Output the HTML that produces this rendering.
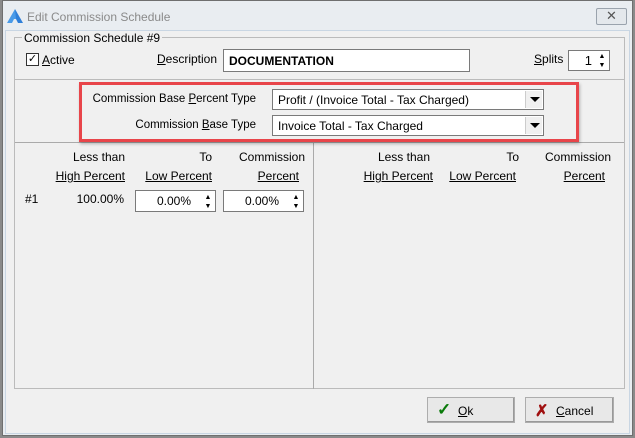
<!DOCTYPE html><html><head><style>
*{margin:0;padding:0;box-sizing:border-box}
body{width:635px;height:438px;overflow:hidden;background:#8a8a8a;font-family:"Liberation Sans",sans-serif;font-size:12px;color:#000;position:relative}
.a{position:absolute}
.win{left:2px;top:0;width:631px;height:436px;background:#e9edf1;border:1px solid #6f6f6f}
.body{left:5px;top:30px;width:625px;height:404px;background:#f0f0f0;border:1px solid #c9d6e3}
.t{position:absolute;white-space:nowrap}
.r{text-align:right}
u{text-decoration:underline}
.inp{position:absolute;background:#fff;border:1px solid #7a7a7a}
.dd{position:absolute;right:1px;top:1px;bottom:1px;width:17px;background:#f0f0f0;border-left:1px solid #ccc}
.dd:after{content:"";position:absolute;left:4px;top:6px;border-left:5px solid transparent;border-right:5px solid transparent;border-top:5px solid #000}
.spin{position:absolute;right:1px;top:1px;bottom:1px;width:12px;font-size:7px;line-height:9px;text-align:center}
.btn{position:absolute;background:#e8e8e8;border:1px solid #adadad;box-shadow:inset -1px -1px #999}
</style></head><body>
<div class="a win"></div>
<svg class="a" style="left:7px;top:9px" width="16" height="14" viewBox="0 0 16 14"><path d="M8 0 L16 14 L11 14 L8 8 Z" fill="#2f7fd8"/><path d="M8 0 L0 14 L5 14 L7 10 L9 10 Z" fill="#4a9be8"/></svg>
<div class="t" style="left:27px;top:10px;font-size:12px;color:#8a8a8a">Edit Commission Schedule</div>
<div class="a" style="left:596px;top:8px;width:31px;height:17px;border:1px solid #9aa3ad;background:#e4e8ec;border-radius:2px;font-size:13px;text-align:center;line-height:14px;color:#555">✕</div>
<div class="a body"></div>
<div class="a" style="left:14px;top:37px;width:611px;height:352px;border:1px solid #bbb"></div>
<div class="t" style="left:22px;top:31px;font-size:12px;background:#f0f0f0;padding:0 2px">Commission Schedule #9</div>
<div class="a" style="left:26px;top:53px;width:13px;height:13px;border:1px solid #333;background:#fff;font-size:11px;line-height:11px;text-align:center">✓</div>
<div class="t" style="left:42px;top:53px;font-size:12px"><u>A</u>ctive</div>
<div class="t" style="left:157px;top:52px;font-size:12px"><u>D</u>escription</div>
<div class="inp" style="left:223px;top:49px;width:247px;height:23px;font-weight:bold;font-size:12px;padding:4px 5px">DOCUMENTATION</div>
<div class="t" style="left:534px;top:52px;font-size:12px"><u>S</u>plits</div>
<div class="inp" style="left:568px;top:50px;width:42px;height:21px;font-size:13px;padding:2px 17px 0 0;text-align:right">1<div class="spin">▲<br>▼</div></div>
<div class="a" style="left:15px;top:79px;width:609px;border-top:1px solid #bbb"></div>
<div class="a" style="left:15px;top:142px;width:609px;height:247px;border-top:1px solid #aaa"></div>
<div class="a" style="left:313px;top:142px;height:247px;border-left:1px solid #aaa"></div>
<div class="a" style="left:79px;top:82px;width:500px;height:60px;border:3px solid #e8454a;box-shadow:1px 2px 3px rgba(0,0,0,.25)"></div>
<div class="t r" style="left:60px;width:196px;top:93px;font-size:11.5px">Commission Base <u>P</u>ercent Type</div>
<div class="t r" style="left:60px;width:196px;top:119px;font-size:11.5px">Commission <u>B</u>ase Type</div>
<div class="inp" style="left:272px;top:89px;width:272px;height:21px;font-size:12px;padding:3px 5px">Profit / (Invoice Total - Tax Charged)<div class="dd"></div></div>
<div class="inp" style="left:272px;top:115px;width:272px;height:21px;font-size:12px;padding:3px 5px">Invoice Total - Tax Charged<div class="dd"></div></div>
<div class="t r" style="left:40px;width:85px;top:150px">Less than</div>
<div class="t r" style="left:40px;width:85px;top:169px"><u>High Percent</u></div>
<div class="t r" style="left:130px;width:82px;top:150px">To</div>
<div class="t r" style="left:130px;width:82px;top:169px"><u>Low Percent</u></div>
<div class="t r" style="left:220px;width:85px;top:150px">Commission</div>
<div class="t r" style="left:220px;width:79px;top:169px"><u>Percent</u></div>
<div class="t" style="left:25px;top:192px">#1</div>
<div class="t r" style="left:60px;width:64px;top:192px">100.00%</div>
<div class="inp" style="left:135px;top:190px;width:81px;height:22px;padding:3px 24px 0 0;text-align:right">0.00%<div class="spin" style="top:2px">▲<br>▼</div></div>
<div class="inp" style="left:223px;top:190px;width:81px;height:22px;padding:3px 24px 0 0;text-align:right">0.00%<div class="spin" style="top:2px">▲<br>▼</div></div>
<div class="t r" style="left:340px;width:90px;top:150px">Less than</div>
<div class="t r" style="left:340px;width:93px;top:169px"><u>High Percent</u></div>
<div class="t r" style="left:440px;width:79px;top:150px">To</div>
<div class="t r" style="left:440px;width:76px;top:169px"><u>Low Percent</u></div>
<div class="t r" style="left:520px;width:91px;top:150px">Commission</div>
<div class="t r" style="left:520px;width:85px;top:169px"><u>Percent</u></div>
<div class="btn" style="left:427px;top:397px;width:88px;height:26px"><span class="t" style="left:9px;top:2px;color:#0a7a0a;font-size:17px;font-weight:bold">✓</span><span class="t" style="left:30px;top:6px;font-size:12px"><u>O</u>k</span></div>
<div class="btn" style="left:525px;top:397px;width:89px;height:26px"><span class="t" style="left:9px;top:3px;color:#a01010;font-size:16px;font-weight:bold">✗</span><span class="t" style="left:30px;top:6px;font-size:12px"><u>C</u>ancel</span></div>
</body></html>
